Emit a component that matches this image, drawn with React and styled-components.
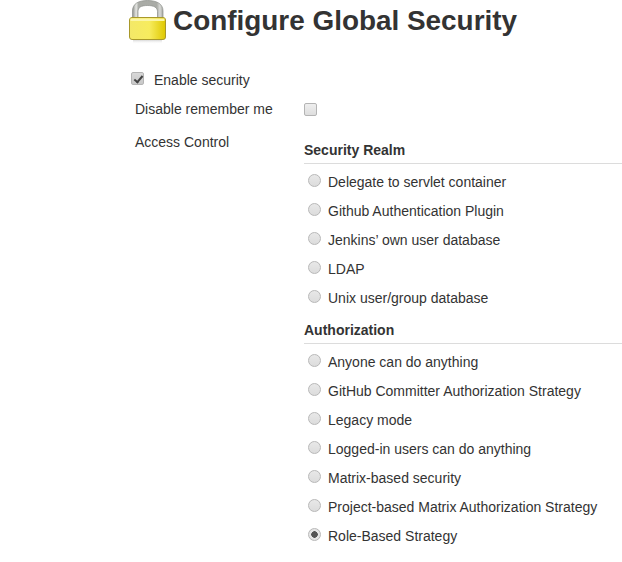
import React from "react";
import styled, { createGlobalStyle } from "styled-components";

const GlobalStyle = createGlobalStyle`
  html, body {
    margin: 0;
    background: #fff;
    font-family: "Liberation Sans", Arial, sans-serif;
    color: #333;
  }
`;

const realms = [
  "Delegate to servlet container",
  "Github Authentication Plugin",
  "Jenkins’ own user database",
  "LDAP",
  "Unix user/group database",
];

const strategies = [
  "Anyone can do anything",
  "GitHub Committer Authorization Strategy",
  "Legacy mode",
  "Logged-in users can do anything",
  "Matrix-based security",
  "Project-based Matrix Authorization Strategy",
  "Role-Based Strategy",
];

const LockIcon = () => (
  <svg width="40" height="44" viewBox="0 0 40 44">
    <defs>
      <linearGradient id="shackle" x1="0" x2="1" y1="0" y2="0">
        <stop offset="0" stopColor="#8d8f8b" />
        <stop offset="0.12" stopColor="#e6e7e4" />
        <stop offset="0.2" stopColor="#a9aba6" />
        <stop offset="0.8" stopColor="#a9aba6" />
        <stop offset="0.9" stopColor="#d9dad7" />
        <stop offset="1" stopColor="#a4a6a1" />
      </linearGradient>
      <linearGradient id="body" x1="0" x2="1" y1="0" y2="0">
        <stop offset="0" stopColor="#f3e868" />
        <stop offset="0.55" stopColor="#f7ec5e" />
        <stop offset="1" stopColor="#dfc800" />
      </linearGradient>
      <linearGradient id="shade" x1="0" x2="0" y1="0" y2="1">
        <stop offset="0" stopColor="#c8c8c8" stopOpacity="0.7" />
        <stop offset="1" stopColor="#ffffff" stopOpacity="0" />
      </linearGradient>
    </defs>
    <rect x="4" y="40" width="29" height="4" fill="url(#shade)" />
    <path
      d="M3.500 19V11C3.500 4 9 0.500 18.500 0.500S34 4 34 11V19H28.500V11.500C28.500 7.500 25 5.500 18.500 5.500S9 7.500 9 11.500V19Z"
      fill="url(#shackle)"
      stroke="#8a8c88"
      strokeWidth="0.7"
    />
    <rect x="0.500" y="17.500" width="36" height="22" rx="2.500" fill="url(#body)" stroke="#a8982a" />
    <rect x="1.500" y="18.500" width="34" height="2.500" fill="#fbf6a8" />
  </svg>
);

const Page = styled.div`
  width: 622px;
  height: 562px;
  box-sizing: border-box;
  overflow: hidden;
  padding-left: 129px;
  font-size: 14px;
`;

const Header = styled.header`
  display: flex;
  align-items: flex-start;
  gap: 4px;
  height: 72px;
`;

const Title = styled.h1`
  margin: 5px 0 0;
  font-size: 27.900px;
  line-height: 32px;
  font-weight: 700;
  color: #333;
`;

const CheckRow = styled.label`
  display: flex;
  align-items: center;
  height: 16px;
  margin-bottom: 13px;
  color: #333;
`;

const Box = styled.input.attrs({ type: "checkbox" })`
  appearance: none;
  width: 13px;
  height: 13px;
  margin: 0;
  flex: none;
  position: relative;
  box-sizing: border-box;
  border: 1px solid #b4b4b4;
  border-radius: 2px;
  background: linear-gradient(#eeeeee, #dedede);

  &:checked {
    background: linear-gradient(#d8d8d8, #c8c8c8);
  }

  &:checked::after {
    content: "";
    position: absolute;
    left: 3.500px;
    top: 0.500px;
    width: 3px;
    height: 7px;
    border: solid #444;
    border-width: 0 2px 2px 0;
    transform: rotate(40deg);
  }
`;

const EnableBox = styled(Box)`
  margin: 0 10px 3px 2px;
`;

const Settings = styled.div`
  display: grid;
  grid-template-columns: 169px 318px;
  padding-left: 6px;
`;

const FieldLabel = styled.div`
  line-height: 16px;
`;

const ControlCell = styled.div`
  display: flex;
  align-items: center;
  height: 16px;
`;

const AccessLabel = styled(FieldLabel)`
  margin-top: 17px;
`;

const AccessPanel = styled.div`
  padding-top: 25px;
`;

const SectionTitle = styled.h3`
  margin: 0;
  padding-bottom: 5px;
  font-size: 14px;
  line-height: 16px;
  font-weight: 700;
  color: #333;
  border-bottom: 1px solid #dcdcdc;
`;

const RadioList = styled.div`
  display: flex;
  flex-direction: column;
  gap: 13px;
  padding: 10px 0 0;
  margin-bottom: 16px;
`;

const RadioRow = styled.label`
  display: flex;
  align-items: center;
  height: 16px;
  white-space: nowrap;
`;

const Radio = styled.input.attrs({ type: "radio" })`
  appearance: none;
  width: 13px;
  height: 13px;
  margin: 0 7px 4px 4px;
  flex: none;
  box-sizing: border-box;
  border: 1px solid #b8b8b8;
  border-radius: 50%;
  background: linear-gradient(#e8e8e8, #dcdcdc);

  &:checked {
    background: radial-gradient(circle, #555 0, #555 3px, #e6e6e6 3.500px);
  }
`;

const Options = ({ name, items, selected }) => (
  <RadioList>
    {items.map((item) => (
      <RadioRow key={item}>
        <Radio name={name} defaultChecked={item === selected} />
        {item}
      </RadioRow>
    ))}
  </RadioList>
);

const App = () => (
  <Page>
    <GlobalStyle />
    <Header>
      <LockIcon />
      <Title>Configure Global Security</Title>
    </Header>
    <CheckRow>
      <EnableBox defaultChecked />
      Enable security
    </CheckRow>
    <Settings>
      <FieldLabel>Disable remember me</FieldLabel>
      <ControlCell>
        <Box />
      </ControlCell>
      <AccessLabel>Access Control</AccessLabel>
      <AccessPanel>
        <SectionTitle>Security Realm</SectionTitle>
        <Options name="realm" items={realms} />
        <SectionTitle>Authorization</SectionTitle>
        <Options name="authz" items={strategies} selected="Role-Based Strategy" />
      </AccessPanel>
    </Settings>
  </Page>
);

export default App;
